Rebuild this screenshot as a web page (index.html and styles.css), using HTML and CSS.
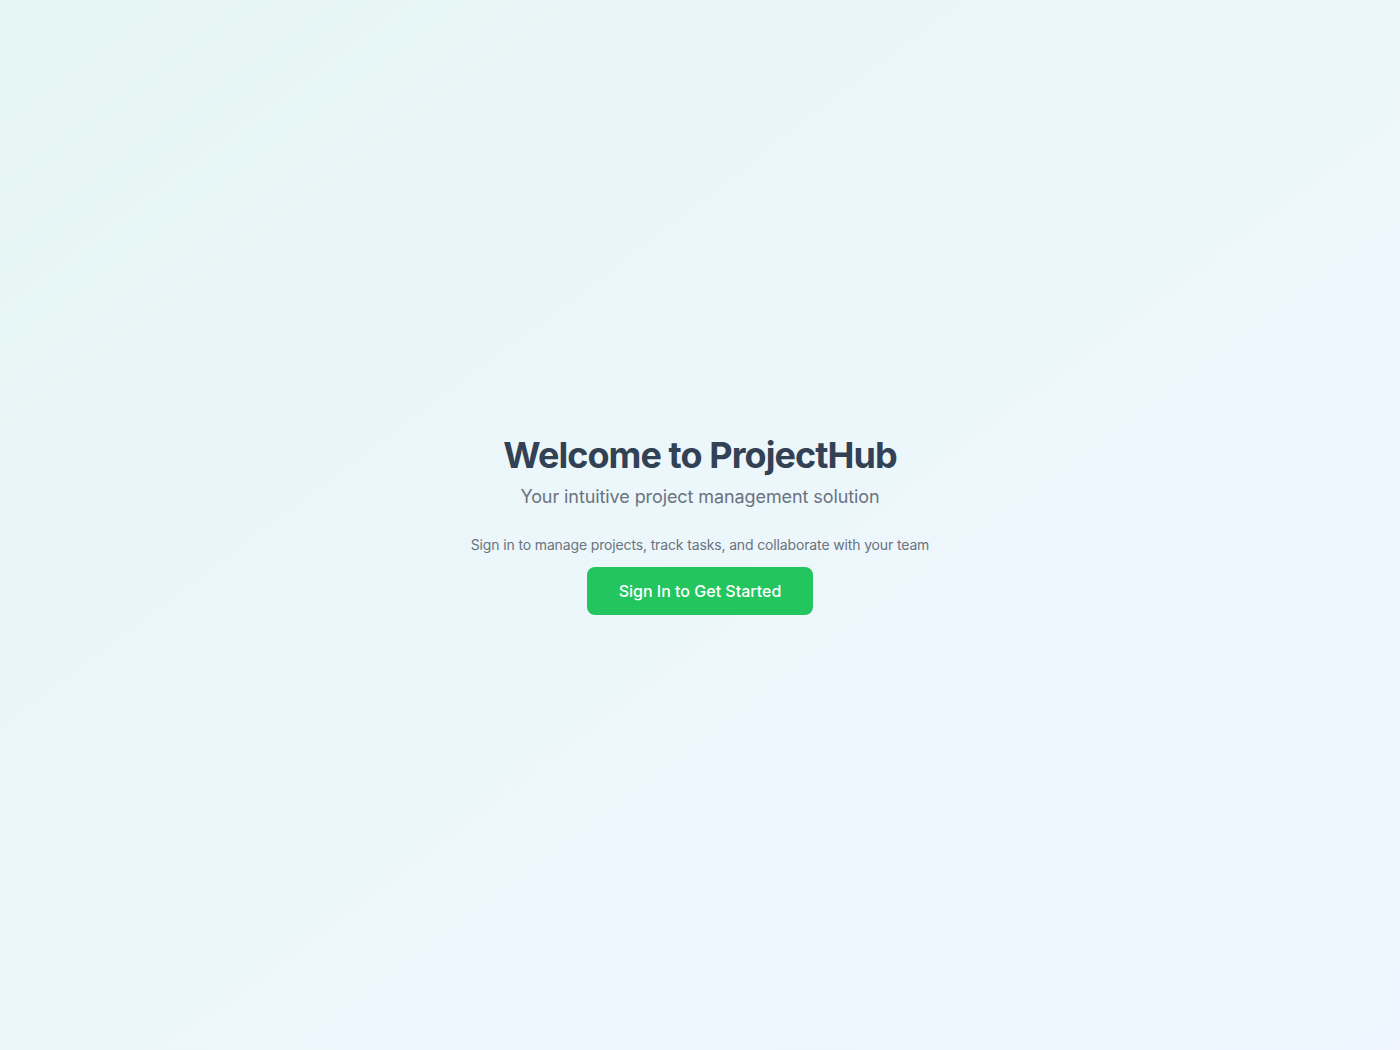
FILE: index.html
```html
<!DOCTYPE html>
<html lang="en">
<head>
<meta charset="utf-8">
<title>ProjectHub</title>
<link rel="stylesheet" href="styles.css">
</head>
<body>
<main class="page">
  <section class="hero">
    <h1 class="title">Welcome to ProjectHub</h1>
    <p class="subtitle">Your intuitive project management solution</p>
    <p class="note">Sign in to manage projects, track tasks, and collaborate with your team</p>
    <button class="cta" type="button">Sign In to Get Started</button>
  </section>
</main>
</body>
</html>
```
FILE: styles.css
```css
* { box-sizing: border-box; }
html, body { margin: 0; padding: 0; }
body {
  font-family: Inter, "Noto Sans", sans-serif;
  background: linear-gradient(to bottom right, #e5f5f3, #ecf7fb 50%, #eff6ff);
  min-height: 100vh;
}
.page {
  min-height: 100vh;
  display: flex;
  align-items: center;
  justify-content: center;
}
.hero {
  display: flex;
  flex-direction: column;
  align-items: center;
  text-align: center;
}
.title {
  margin: 0;
  font-size: 36px;
  line-height: 40px;
  font-weight: 700;
  color: #334155;
  letter-spacing: -0.026em;
}
.subtitle {
  margin: 8px 0 0;
  font-size: 18px;
  line-height: 28px;
  color: #6b7280;
  letter-spacing: -0.005em;
}
.note {
  margin: 24px 0 0;
  font-size: 14px;
  line-height: 20px;
  color: #6b7280;
  letter-spacing: -0.01em;
}
.cta {
  margin-top: 12px;
  height: 48px;
  padding: 0 32px;
  border: none;
  border-radius: 8px;
  background: #22c55e;
  color: #ffffff;
  font-family: inherit;
  font-size: 16px;
  font-weight: 500;
  cursor: pointer;
}
```
